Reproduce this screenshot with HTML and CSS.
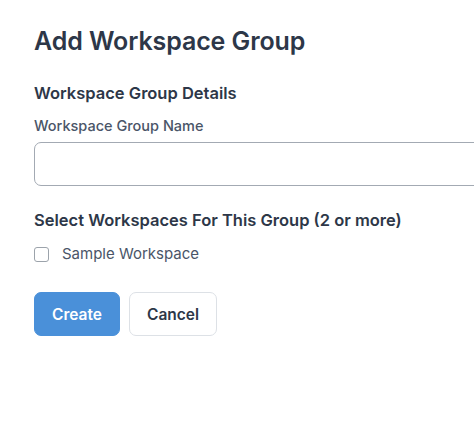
FILE: index.html
```html
<!DOCTYPE html>
<html lang="en">
<head>
<meta charset="utf-8">
<title>Add Workspace Group</title>
<link rel="stylesheet" href="styles.css">
</head>
<body>
<main class="page">
  <h1 class="title">Add Workspace Group</h1>
  <h2 class="section">Workspace Group Details</h2>
  <label class="field-label" for="name">Workspace Group Name</label>
  <input class="text-input" id="name" type="text">
  <h2 class="section section-select">Select Workspaces For This Group (2 or more)</h2>
  <label class="check-row">
    <span class="checkbox"></span>
    <span class="check-label">Sample Workspace</span>
  </label>
  <div class="actions">
    <button class="btn btn-primary" type="button">Create</button>
    <button class="btn btn-secondary" type="button">Cancel</button>
  </div>
</main>
</body>
</html>
```

FILE: styles.css
```css
html, body {
  margin: 0;
  padding: 0;
  background: #ffffff;
}
body {
  font-family: Inter, "Noto Sans", "Liberation Sans", sans-serif;
  color: #2d3748;
  overflow: hidden;
}
.page {
  display: flex;
  flex-direction: column;
  align-items: flex-start;
  padding: 26px 0 0 34px;
}
.title {
  margin: 0;
  font-size: 25px;
  line-height: 30px;
  font-weight: 600;
  color: #2d3748;
  letter-spacing: -0.1px;
}
.section {
  margin: 0;
  font-size: 16.5px;
  line-height: 20px;
  font-weight: 600;
  color: #2d3748;
}
.title + .section {
  margin-top: 27px;
}
.field-label {
  margin-top: 14px;
  font-size: 14.5px;
  line-height: 18px;
  font-weight: 500;
  color: #4a5568;
}
.text-input {
  box-sizing: border-box;
  margin-top: 7px;
  width: 460px;
  height: 44px;
  border: 1px solid #a3aab3;
  border-radius: 7px;
  background: #fff;
  outline: none;
  padding: 0 12px;
  font: inherit;
}
.section-select {
  margin-top: 24px;
}
.check-row {
  margin-top: 15px;
  display: flex;
  align-items: center;
  gap: 13px;
}
.checkbox {
  box-sizing: border-box;
  width: 15px;
  height: 15px;
  border: 1px solid #9ca3ab;
  border-radius: 3px;
  background: #fff;
}
.check-label {
  font-size: 15px;
  line-height: 18px;
  color: #4a5568;
}
.actions {
  margin-top: 29px;
  display: flex;
  gap: 9px;
}
.btn {
  box-sizing: border-box;
  height: 44px;
  padding: 0;
  border-radius: 7px;
  font-family: inherit;
  font-size: 15.5px;
  font-weight: 600;
  cursor: pointer;
}
.btn-primary {
  width: 86px;
  background: #4a90d9;
  border: 1px solid #4a90d9;
  color: #ffffff;
}
.btn-secondary {
  width: 88px;
  background: #ffffff;
  border: 1px solid #dde1e6;
  color: #2d3748;
}
```
